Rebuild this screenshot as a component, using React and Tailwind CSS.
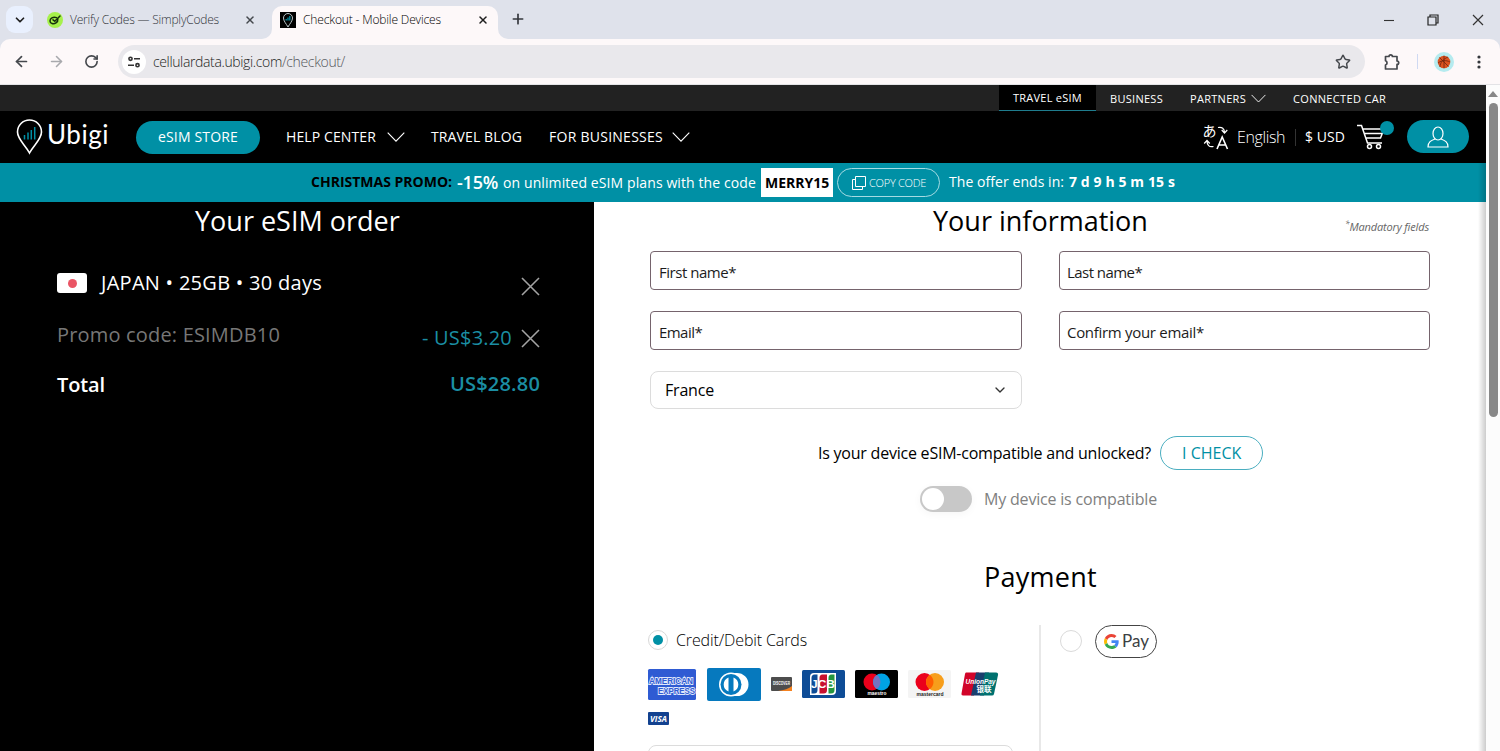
import { ArrowLeft, ArrowRight, ChevronDown, Plus, RotateCw, Star, X } from 'lucide-react';

// wide, flat chevron used by the site menus
const MenuArrow = ({ className }) => (
  <svg className={className} viewBox="0 0 18 10" fill="none" stroke="#fff" strokeWidth="1.1">
    <path d="M.7 .7 9 9.2 17.3 .7" />
  </svg>
);

const Cross = () => (
  <svg className="h-[19px] w-[19px] shrink-0" viewBox="0 0 19 19" stroke="#a3a3a3" strokeWidth="1.6">
    <path d="M1 1 18 18M18 1 1 18" />
  </svg>
);

const TabBar = () => (
  <div className="flex h-[39px] items-end bg-[#dfe2eb]">
    <div className="mb-[6px] ml-[6px] flex h-[27px] w-[27px] shrink-0 items-center justify-center rounded-[9px] bg-[#e9f0fe]">
      <ChevronDown className="h-[14px] w-[14px] text-[#1f1f1f]" strokeWidth={3} />
    </div>
    <div className="ml-[14px] flex h-[39px] w-[225px] shrink-0 items-center">
      <svg className="h-4 w-4 shrink-0" viewBox="0 0 16 16">
        <circle cx="8" cy="8" r="8" fill="#a6f14b" />
        <g fill="none" stroke="#16300c" strokeWidth="1.5" strokeLinecap="round">
          <path d="M9.5 5.6C6 4.6 3 6.4 3 9s3.5 3.5 6 1.8c1.5-1 2-2.5 1.8-3.8" />
          <path d="m6 7.800 1.800 1.500L13 4" />
        </g>
      </svg>
      <span className="ml-[7px] w-[149px] text-xs font-light tracking-[-.2px] whitespace-nowrap text-[#303338]">Verify Codes — SimplyCodes</span>
      <X className="ml-[25px] h-[12px] w-[12px] text-[#45484d]" strokeWidth={3} />
    </div>
    <div className="relative flex h-[33px] w-[226px] shrink-0 items-center rounded-t-[10px] bg-[#fdf8f9]">
      <svg className="absolute bottom-0 -left-[10px] h-[10px] w-[10px]" viewBox="0 0 10 10">
        <path d="M10 0v10H0A10 10 0 0 0 10 0Z" fill="#fdf8f9" />
      </svg>
      <svg className="absolute -right-[10px] bottom-0 h-[10px] w-[10px]" viewBox="0 0 10 10">
        <path d="M0 0v10h10A10 10 0 0 1 0 0Z" fill="#fdf8f9" />
      </svg>
      <svg className="mb-[6px] ml-[8px] h-4 w-4 shrink-0" viewBox="0 0 16 16">
        <path d="M0 0h16v16H0z" fill="#000" />
        <path d="M8 15C6 11.500 3.500 9 3.500 6a4.500 4.500 0 0 1 9 0C12.500 9 10 11.500 8 15Z" fill="none" stroke="#b9c6c9" />
        <path d="M6.200 8.500V7M8 8.500V5.500M9.800 8.500V4" stroke="#0090a5" strokeWidth="1.3" />
      </svg>
      <span className="mb-[6px] ml-[7px] w-[138px] text-xs font-light tracking-[-.15px] whitespace-nowrap text-black">Checkout - Mobile Devices</span>
      <X className="mb-[6px] ml-[36px] h-[12px] w-[12px] text-[#1f1f1f]" strokeWidth={3} />
    </div>
    <Plus className="mb-[12px] ml-[12px] h-4 w-4 text-[#34373c]" strokeWidth={2.5} />
    <div className="mr-[16px] mb-[13px] ml-auto flex items-center">
      <svg className="h-3 w-3" viewBox="0 0 12 12" stroke="#333" strokeWidth="1.1"><path d="M1 6.500h10" /></svg>
      <svg className="ml-[32px] h-3 w-3" viewBox="0 0 12 12" fill="none" stroke="#222" strokeWidth="1.2">
        <path d="M1 3h8v8H1zM3 3V1h8v8H9" />
      </svg>
      <svg className="ml-[33px] h-3 w-3" viewBox="0 0 12 12" stroke="#333" strokeWidth="1.2"><path d="m1 1 10 10M11 1 1 11" /></svg>
    </div>
  </div>
);

const Toolbar = () => (
  <div className="bg-[#dfe2eb]">
    <div className="flex h-[46px] items-center rounded-t-[10px] border-b border-[#e3e3e6] bg-[#fdf8f9]">
      <ArrowLeft className="ml-[13px] h-[17px] w-[17px] shrink-0 text-[#45484d]" strokeWidth={2.4} />
      <ArrowRight className="ml-[18px] h-[17px] w-[17px] shrink-0 text-[#a8a9ad]" strokeWidth={2.2} />
      <RotateCw className="ml-[19px] h-[15px] w-[15px] shrink-0 text-[#45484d]" strokeWidth={2.6} />
      <div className="ml-[19px] flex h-[33px] w-[1247px] shrink-0 items-center rounded-full bg-[#e9e8ec]">
        <div className="ml-[4px] flex h-6 w-6 shrink-0 items-center justify-center rounded-full bg-white">
          <svg className="h-3 w-3" viewBox="0 0 12 12" fill="none" stroke="#333" strokeWidth="1.6">
            <circle cx="2.5" cy="2.8" r="1.6" />
            <circle cx="9.5" cy="9.2" r="1.6" />
            <path d="M6 2.800h6M0 9.200h6" />
          </svg>
        </div>
        <span className="mt-px ml-[7px] w-[192px] text-sm font-light tracking-[-.364px] whitespace-nowrap text-[#55575c]">
          <span className="text-[#1c1e22]">cellulardata.ubigi.com</span>/checkout/
        </span>
        <Star className="mr-[14px] ml-auto h-[16px] w-[16px] text-[#45484d]" strokeWidth={2.2} />
      </div>
      <svg className="ml-[18px] h-[18px] w-[18px] shrink-0" viewBox="0 0 18 18" fill="none" stroke="#45484d" strokeWidth="1.7" strokeLinejoin="round">
        <path d="M2.500 3.500H6a1.700 1.700 0 0 1 3.400 0h4.600V8a1.700 1.700 0 0 1 0 3.400V16H2.500v-4a2.200 2.200 0 0 0 0-4.200Z" />
      </svg>
      <div className="ml-[16px] h-[15px] w-px bg-[#cfd9f2]" />
      <svg className="ml-[16px] h-5 w-5 shrink-0" viewBox="0 0 20 20">
        <circle cx="10" cy="10" r="10" fill="#b5ebef" />
        <circle cx="10" cy="10" r="6.3" fill="#dc5321" />
        <path d="M5.500 5.500 14.500 14.500M10 3.700v12.600M4 11c4-3 8-3 12-1M6 15c0-4 3-8 8-10" fill="none" stroke="#6d2410" strokeWidth=".8" />
      </svg>
      <svg className="ml-[17px] h-4 w-4 shrink-0" viewBox="0 0 16 16" fill="#34373c">
        <circle cx="8" cy="3" r="1.6" />
        <circle cx="8" cy="8" r="1.6" />
        <circle cx="8" cy="13" r="1.6" />
      </svg>
    </div>
  </div>
);

const TopLinks = () => (
  <div className="flex h-[26px] items-center bg-[#222] text-[11px] whitespace-nowrap text-white">
    <div className="ml-[999px] flex h-[26px] w-[97px] shrink-0 items-center border-b border-[#1f7d8e] bg-black pt-px pl-[14px]">
      <span className="tracking-[.25px]">TRAVEL eSIM</span>
    </div>
    <span className="mt-[2px] ml-[14px] w-[53px] tracking-[.29px]">BUSINESS</span>
    <span className="mt-[2px] ml-[27px] w-[56px] tracking-[.3px]">PARTNERS</span>
    <MenuArrow className="ml-[5px] h-[9px] w-[15px]" />
    <span className="mt-[2px] ml-[27px] w-[93px] tracking-[.33px]">CONNECTED CAR</span>
  </div>
);

const Nav = () => (
  <div className="flex h-[52px] items-center bg-black text-sm whitespace-nowrap text-white">
    <svg className="ml-[16px] h-[36px] w-[27px] shrink-0" viewBox="0 0 27 36" fill="none">
      <path d="M13.500 34C9.500 26 1.500 20.500 1.500 13a12 12 0 0 1 24 0C25.500 20.500 17.500 26 13.500 34Z" stroke="#fff" strokeWidth="1.6" />
      <path d="M8.500 20.500V16M12 20.500V13.500M15.300 20.500V11M18.700 20.500V8" stroke="#0090a5" strokeWidth="1.5" />
    </svg>
    <span className="-mt-[5px] ml-[4px] w-[61px] font-[Lato,sans-serif] text-[26px] tracking-[.5px]">Ubigi</span>
    <div className="ml-[28px] flex h-[33px] w-[124px] shrink-0 items-center rounded-full bg-[#0090a5] pb-px pl-[22px]">
      <span className="tracking-[.16px]">eSIM STORE</span>
    </div>
    <span className="-mt-px ml-[26px] w-[90px] tracking-[.11px]">HELP CENTER</span>
    <MenuArrow className="ml-[11px] h-[10px] w-[18px]" />
    <span className="-mt-px ml-[26px] w-[91px] tracking-[.12px]">TRAVEL BLOG</span>
    <span className="-mt-px ml-[27px] w-[114px] tracking-[.26px]">FOR BUSINESSES</span>
    <MenuArrow className="ml-[9px] h-[10px] w-[18px]" />

    <svg className="ml-[513px] h-[26px] w-[27px] shrink-0 overflow-visible" viewBox="0 0 27 26" fill="none" stroke="#fff" strokeWidth="1.2">
      <text x="-.5" y="12" fontSize="14" fill="#fff" stroke="none" fontFamily="'Noto Sans CJK JP', sans-serif">あ</text>
      <path d="M15 3.500c4-.8 6.500 1 6.500 5M18.700 6l2.800 3 2.800-3M10.500 22.500C6 23.500 4 21 4 17M1.200 19.500l2.800-3 2.800 3" />
      <path d="m14 25 5.200-12L24.500 25M16 21h6.500" strokeWidth="1.6" />
    </svg>
    <span className="-mt-px ml-[7px] w-[48px] text-base font-light tracking-[-.39px]">English</span>
    <div className="ml-[10px] h-[17px] w-px bg-[#333]" />
    <span className="-mt-px ml-[9px] w-[40px] tracking-[.06px]">$ USD</span>
    <div className="relative ml-[12px] h-[26px] w-[28px] shrink-0">
      <svg className="h-[26px] w-[28px]" viewBox="0 0 28 26" fill="none" stroke="#fff" strokeWidth="1.5">
        <path d="M0 1.500h4.500L10.500 19H25M6 5h21l-3.500 9H9M7.500 9.500h18" />
        <circle cx="12.5" cy="22.5" r="2" />
        <circle cx="21.5" cy="22.5" r="2" />
      </svg>
      <div className="absolute -top-[3px] left-[23px] h-[14px] w-[14px] rounded-full bg-[#0090a5]" />
    </div>
    <div className="mb-px ml-[22px] flex h-[33px] w-[62px] shrink-0 items-center justify-center rounded-full bg-[#0090a5]">
      <svg className="h-[22px] w-[22px]" viewBox="0 0 22 22" fill="none" stroke="#fff" strokeWidth="1.2">
        <ellipse cx="11" cy="7.5" rx="5" ry="6.5" />
        <path d="M8 13c-4 1.500-7 3-7 8h20c0-5-3-6.500-7-8" />
      </svg>
    </div>
  </div>
);

const PromoBar = () => (
  <div className="flex h-[39px] items-center bg-[#0090a5] text-sm whitespace-nowrap text-white">
    <span className="-mt-px ml-[311px] w-[141px] font-bold text-black">CHRISTMAS PROMO:</span>
    <span className="-mt-[2px] ml-[5px] w-[41px] text-lg font-semibold tracking-[-.2px]">-15%</span>
    <span className="ml-[5px] w-[253px] tracking-[.105px]">on unlimited eSIM plans with the code</span>
    <div className="ml-[5px] flex h-[29px] w-[72px] shrink-0 items-center bg-white pl-[4px] font-bold text-black">
      <span>MERRY15</span>
    </div>
    <div className="ml-[4px] flex h-[29px] w-[103px] shrink-0 items-center rounded-full border border-[#a5dbe3] pl-[14px]">
      <svg className="h-[14px] w-[14px]" viewBox="0 0 14 14" fill="none" stroke="#fff" strokeWidth="1">
        <path d="M3.500 .5h10v10h-10zM3.500 3.500h-3v10h10v-3" />
      </svg>
      <span className="ml-[3px] text-[11px] font-light tracking-[-.26px]">COPY CODE</span>
    </div>
    <span className="-mt-[2px] ml-[9px] w-[115px] tracking-[.06px]">The offer ends in:</span>
    <span className="-mt-px ml-[5px] w-[106px] font-bold tracking-[.11px]">7 d 9 h 5 m 15 s</span>
  </div>
);

const Order = () => (
  <div className="flex w-[594px] shrink-0 flex-col bg-black pr-[54px] pl-[57px] text-xl whitespace-nowrap text-white">
    <h2 className="h-[38px] pl-[138px] text-[27px] leading-[38px]">Your eSIM order</h2>
    <div className="mt-[26px] flex h-[34px] items-center">
      <div className="flex h-[20px] w-[30px] items-center justify-center rounded-[3px] bg-white">
        <div className="h-[9px] w-[9px] rounded-full bg-[#ea5565]" />
      </div>
      <span className="ml-[14px] tracking-[.278px]">JAPAN • 25GB • 30 days</span>
      <div className="mt-[7px] ml-auto"><Cross /></div>
    </div>
    <div className="mt-[18px] flex h-[34px] items-center">
      <span className="tracking-[.177px] text-[#777]">Promo code: ESIMDB10</span>
      <span className="mt-[6px] mr-[9px] ml-auto tracking-[.2px] text-[#1b8ea3]">- US$3.20</span>
      <div className="mt-[6px]"><Cross /></div>
    </div>
    <div className="mt-[16px] flex h-[34px] items-center justify-between">
      <span className="font-semibold tracking-[-.12px]">Total</span>
      <span className="-mt-[3px] font-semibold tracking-[.18px] text-[#1b8ea3]">US$28.80</span>
    </div>
  </div>
);

const Field = ({ label, track }) => (
  <div className="flex h-[39px] items-center rounded-[4px] border border-[#75636c] pt-[3px] pl-[8px] text-[15px] text-[#1c1c1c]">
    <span className={track}>{label}</span>
  </div>
);

const Cards = () => (
  <div className="flex h-[34px] items-center font-['Liberation_Sans',sans-serif] font-bold">
    {/* American Express */}
    <svg className="h-[31px] w-[48px] overflow-visible" viewBox="0 0 48 31" fontSize="9">
      <rect width="48" height="31" rx="1.5" fill="#2f5bd3" />
      <g fill="#2f5bd3" stroke="#dfe7fb" strokeWidth="1.8" paintOrder="stroke">
        <text x="1" y="14.5" textLength="44" lengthAdjust="spacingAndGlyphs">AMERICAN</text>
        <text x="10" y="24.5" textLength="37" lengthAdjust="spacingAndGlyphs">EXPRESS</text>
      </g>
    </svg>
    {/* Diners Club */}
    <svg className="ml-[11px] h-[33px] w-[54px]" viewBox="0 0 54 33">
      <rect width="54" height="33" rx="2" fill="#0679be" />
      <path d="M24 5h6a11.500 11.500 0 0 1 0 23h-6Z" fill="#fff" />
      <circle cx="24" cy="16.5" r="12" fill="#fff" />
      <circle cx="24" cy="16.5" r="10.5" fill="#0679be" />
      <path d="M21.500 9.500v14a7.500 7.500 0 0 1 0-14ZM26.500 9.500v14a7.500 7.500 0 0 0 0-14Z" fill="#fff" />
    </svg>
    {/* Discover */}
    <svg className="ml-[10px] h-[14px] w-[21px] overflow-visible" viewBox="0 0 21 14">
      <rect width="21" height="14" rx="1" fill="#4d4d4d" />
      <path d="M7 14c6-.5 11-2.500 14-5v5Z" fill="#f58220" />
      <text x="2" y="7.5" fontSize="4.5" fill="#fff" textLength="17" lengthAdjust="spacingAndGlyphs">DISCOVER</text>
    </svg>
    {/* JCB */}
    <svg className="ml-[10px] h-[28px] w-[43px]" viewBox="0 0 43 28">
      <rect width="43" height="28" rx="1.5" fill="#0e4c96" />
      <path d="M12 3h22v18q0 4-4 4H8V7q0-4 4-4Z" fill="#fff" />
      <path d="M12.500 4.500h3V20q0 3.500-3.500 3.500H9.500V8q0-3.500 3-3.500Z" fill="#0e4c96" />
      <path d="M20.500 4.500H25V20q0 3.500-3.500 3.500h-4V8q0-3.500 3-3.500Z" fill="#c8102e" />
      <path d="M29.500 4.500h3V20q0 3.500-3.500 3.500h-2.500V8q0-3.500 3-3.500Z" fill="#24963e" />
      <text x="9" y="17.5" fontSize="10" fill="#fff" textLength="24" lengthAdjust="spacingAndGlyphs">JCB</text>
    </svg>
    {/* Maestro */}
    <svg className="ml-[10px] h-[28px] w-[43px]" viewBox="0 0 43 28">
      <rect width="43" height="28" rx="1.5" fill="#000" />
      <circle cx="17" cy="12" r="8.5" fill="#eb001b" />
      <circle cx="26.5" cy="12" r="8.5" fill="#00a2e5" />
      <path d="M21.750 5a8.500 8.500 0 0 1 0 14 8.500 8.500 0 0 1 0-14Z" fill="#7673c0" />
      <text x="12.5" y="25" fontSize="5" fill="#fff" textLength="19" lengthAdjust="spacingAndGlyphs">maestro</text>
    </svg>
    {/* Mastercard */}
    <svg className="ml-[10px] h-[28px] w-[43px]" viewBox="0 0 43 28">
      <rect width="43" height="28" rx="1.5" fill="#f4f4f4" />
      <circle cx="16.5" cy="12" r="9" fill="#eb001b" />
      <circle cx="27" cy="12" r="9" fill="#f79e1b" />
      <path d="M21.750 4.700a9 9 0 0 1 0 14.600 9 9 0 0 1 0-14.600Z" fill="#ff5f00" />
      <text x="8.5" y="26" fontSize="5" fill="#222" textLength="27" lengthAdjust="spacingAndGlyphs">mastercard</text>
    </svg>
    {/* UnionPay */}
    <svg className="ml-[10px] h-[24px] w-[38px]" viewBox="0 0 38 24">
      <path d="M5 .5h13L13 23.500H2Q0 23.500.5 21.500L4 2Q4.300.5 5 .5Z" fill="#d10429" />
      <path d="M15 .5h13L23 23.500H10Z" fill="#1a3f6e" />
      <path d="M24 .5h11Q37.500.5 37 3L33 22q-.4 1.500-2 1.500H19Z" fill="#00716f" />
      <g fill="#fff">
        <text x="4.5" y="11.5" fontSize="7" fontStyle="italic" textLength="30" lengthAdjust="spacingAndGlyphs">UnionPay</text>
        <text x="15.5" y="19.5" fontSize="7.5" fontFamily="'Noto Sans CJK SC', sans-serif" textLength="15" lengthAdjust="spacingAndGlyphs">银联</text>
      </g>
    </svg>
  </div>
);

const Information = () => (
  <div className="flex w-[892px] flex-col pl-[54px] whitespace-nowrap">
    <div className="flex h-[38px] pl-[285px]">
      <h2 className="w-[412px] text-[27px] leading-[38px]">Your information</h2>
      <span className="mt-[17px] text-[11px] tracking-[-.15px] text-[#666] italic"><sup>*</sup>Mandatory fields</span>
    </div>
    <div className="mt-[11px] ml-[2px] grid grid-cols-[372px_371px] gap-x-[37px] gap-y-[21px]">
      <Field label="First name*" track="tracking-[-.47px]" />
      <Field label="Last name*" track="-ml-px tracking-[-.55px]" />
      <Field label="Email*" track="tracking-[-.55px]" />
      <Field label="Confirm your email*" track="-ml-px tracking-[-.3px]" />
      <div className="flex h-[38px] items-center justify-between rounded-lg border border-[#dcdcdc] pr-[13px] pl-[14px]">
        <span className="tracking-[-.2px]">France</span>
        <ChevronDown className="h-[16px] w-[16px] text-[#333]" strokeWidth={2} />
      </div>
    </div>
    <div className="mt-[27px] ml-[171px] flex h-[34px] items-center">
      <span className="-ml-px w-[334px] tracking-[-.226px]">Is your device eSIM-compatible and unlocked?</span>
      <div className="ml-[8px] flex h-[34px] w-[103px] items-center rounded-full border border-[#4aaec0] pl-[21px] text-[#0090a5]">
        <span>I CHECK</span>
      </div>
    </div>
    <div className="mt-[16px] ml-[272px] flex h-[26px] items-center">
      <div className="flex h-[26px] w-[52px] items-center rounded-full bg-[#c8c8c8] pl-[2px] shadow-[0_2px_8px_rgba(0,0,0,0.04)]">
        <div className="h-[22px] w-[22px] rounded-full bg-white" />
      </div>
      <span className="ml-[12px] tracking-[-.19px] text-[#808080]">My device is compatible</span>
    </div>
    <h2 className="mt-[46px] ml-[336px] h-[38px] text-[27px] leading-[38px] tracking-[.27px]">Payment</h2>
    <div className="mt-[29px] flex h-[126px]">
      <div className="w-[391px]">
        <div className="mt-[4px] flex h-[22px] items-center">
          <div className="flex h-[20px] w-[20px] items-center justify-center rounded-full border border-[#d8d8d8]">
            <div className="h-[10px] w-[10px] rounded-full bg-[#0090a5]" />
          </div>
          <span className="ml-[8px] font-light tracking-[-.12px] text-black">Credit/Debit Cards</span>
        </div>
        <div className="mt-[16px]"><Cards /></div>
        <svg className="mt-[11px] h-[13px] w-[21px]" viewBox="0 0 21 13">
          <rect width="21" height="13" rx="1" fill="#12418f" />
          <text x="2" y="9.5" fontSize="8" fontWeight="bold" fontStyle="italic" fill="#fff" textLength="17" lengthAdjust="spacingAndGlyphs">VISA</text>
        </svg>
        <div className="mt-[20px] h-[30px] w-[365px] rounded-lg border border-[#dcdcdc]" />
      </div>
      <div className="w-[2px] bg-[#e8e8e8]" />
      <div className="flex h-[32px] items-center pl-[19px]">
        <div className="h-[22px] w-[22px] rounded-full border border-[#dadada]" />
        <div className="ml-[13px] flex h-[33px] w-[62px] items-center rounded-full border-[1.5px] border-[#444] pl-[8px]">
          <svg className="h-[15px] w-[15px]" viewBox="0 0 48 48">
            <path fill="#EA4335" d="M24 9.500c3.540 0 6.710 1.220 9.210 3.600l6.850-6.850C35.900 2.380 30.470 0 24 0 14.620 0 6.510 5.380 2.560 13.220l7.980 6.190C12.430 13.720 17.740 9.500 24 9.500z" />
            <path fill="#4285F4" d="M46.980 24.550c0-1.570-.15-3.090-.38-4.550H24v9.020h12.940c-.58 2.960-2.260 5.480-4.780 7.180l7.730 6c4.510-4.180 7.090-10.360 7.090-17.650z" />
            <path fill="#FBBC05" d="M10.530 28.590c-.48-1.450-.76-2.990-.76-4.590s.27-3.140.76-4.590l-7.980-6.190C.92 16.460 0 20.120 0 24c0 3.880.92 7.540 2.560 10.780l7.970-6.190z" />
            <path fill="#34A853" d="M24 48c6.480 0 11.930-2.130 15.890-5.810l-7.730-6c-2.150 1.450-4.920 2.300-8.160 2.300-6.260 0-11.570-4.220-13.470-9.910l-7.980 6.190C6.510 42.620 14.620 48 24 48z" />
          </svg>
          <span className="ml-[3px] font-[Lato,sans-serif] text-[17px] text-[#3c4043]">Pay</span>
        </div>
      </div>
    </div>
  </div>
);

const Scrollbar = () => (
  <div className="flex w-[14px] shrink-0 flex-col items-center bg-[#fcfcfc]">
    <svg className="mt-[6px] h-[6px] w-[10px]" viewBox="0 0 10 6"><path d="M5 0 10 6H0Z" fill="#888" /></svg>
    <div className="mt-[6px] h-[314px] w-[9px] rounded-full bg-[#888]" />
  </div>
);

export default function App() {
  return (
    <div className="flex h-[751px] w-[1500px] flex-col overflow-hidden bg-white font-['Open_Sans',sans-serif] text-base text-black">
      <TabBar />
      <Toolbar />
      <div className="flex min-h-0 flex-1">
        <div className="relative flex w-[1486px] shrink-0 flex-col overflow-hidden">
          <TopLinks />
          <Nav />
          <PromoBar />
          <div className="flex min-h-0 flex-1">
            <Order />
            <Information />
          </div>
          <div className="absolute top-[78px] right-0 h-full w-[8px] bg-linear-to-l from-black/20 to-transparent" />
        </div>
        <Scrollbar />
      </div>
    </div>
  );
}
